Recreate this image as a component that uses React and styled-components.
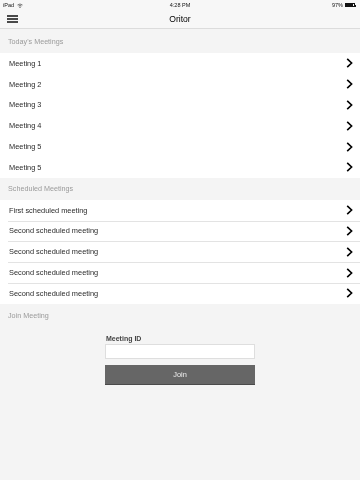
import React from 'react';
import styled, { createGlobalStyle } from 'styled-components';

const GlobalStyle = createGlobalStyle`
  html, body {
    margin: 0;
    padding: 0;
    background: #f4f4f4;
  }
  body {
    font-family: "Liberation Sans", Arial, sans-serif;
    -webkit-font-smoothing: antialiased;
  }
`;

const today = ['Meeting 1', 'Meeting 2', 'Meeting 3', 'Meeting 4', 'Meeting 5', 'Meeting 5'];
const scheduled = [
  'First scheduled meeting',
  'Second scheduled meeting',
  'Second scheduled meeting',
  'Second scheduled meeting',
  'Second scheduled meeting'
];

// the whole screen is greyscale; the filter also keeps the tiny text from colour fringing
const Screen = styled.div`
  width: 360px;
  height: 480px;
  background: #f4f4f4;
  display: flex;
  flex-direction: column;
  overflow: hidden;
  filter: grayscale(1);
`;

const StatusBar = styled.div`
  height: 10px;
  background: #f7f7f7;
  display: grid;
  grid-template-columns: 1fr auto 1fr;
  align-items: center;
  padding: 0 3px;
  font-size: 5.5px;
  color: #111;
`;

const StatusLeft = styled.div`
  display: flex;
  align-items: center;
  gap: 3px;
`;

const StatusRight = styled.div`
  display: flex;
  align-items: center;
  justify-content: flex-end;
  gap: 2px;
  padding-right: 2px;
`;

const Battery = styled.span`
  display: inline-block;
  width: 10px;
  height: 4px;
  border: 0.6px solid #111;
  background: linear-gradient(90deg, #111 92%, transparent 92%);
  box-sizing: border-box;
  position: relative;
  &::after {
    content: '';
    position: absolute;
    right: -2px;
    top: 1px;
    width: 1px;
    height: 1.5px;
    background: #111;
  }
`;

const NavBar = styled.div`
  height: 18px;
  background: #f7f7f7;
  border-bottom: 1px solid #dcdcdc;
  display: grid;
  grid-template-columns: 40px 1fr 40px;
  align-items: center;
`;

const MenuButton = styled.div`
  padding-left: 7px;
  display: flex;
  align-items: center;
`;

const Title = styled.div`
  text-align: center;
  font-size: 8.6px;
  color: #000;
`;

const SectionHeader = styled.div`
  height: ${(p) => p.h}px;
  display: flex;
  align-items: center;
  padding-left: 8px;
  font-size: 7.2px;
  color: #9a9a9a;
`;

const List = styled.div`
  background: #fff;
  display: flex;
  flex-direction: column;
`;

const Row = styled.div`
  height: 20.8px;
  box-sizing: border-box;
  display: flex;
  align-items: center;
  justify-content: space-between;
  padding: 0 7px 0 9px;
  font-size: 7.4px;
  color: #2a2a2a;
  position: relative;
  ${(p) =>
    p.divided &&
    `
    &:not(:first-child)::before {
      content: '';
      position: absolute;
      left: 8px;
      right: 0;
      top: 0;
      height: 1px;
      background: #e3e3e3;
    }
  `}
`;

const JoinForm = styled.div`
  display: flex;
  flex-direction: column;
  width: 150px;
  margin: 7px 0 0 105px;
`;

const Label = styled.label`
  font-size: 7px;
  font-weight: bold;
  color: #444;
  padding-left: 1px;
  margin-bottom: 2px;
`;

const Input = styled.input`
  height: 15px;
  box-sizing: border-box;
  border: 1px solid #dedede;
  background: #fff;
  outline: none;
  padding: 0 3px;
  margin: 0;
`;

const JoinButton = styled.button`
  margin-top: 6px;
  height: 20px;
  box-sizing: border-box;
  border: none;
  border-bottom: 1px solid #4a4a4a;
  background: #666;
  color: #f2f2f2;
  font-family: "Liberation Sans", Arial, sans-serif;
  font-size: 7.4px;
  padding: 0;
`;

const Chevron = () => (
  <svg width="7" height="10" viewBox="0 0 7 10">
    <path d="M1.2 0.9 L5.6 5 L1.2 9.1" fill="none" stroke="#000" strokeWidth="1.6" />
  </svg>
);

const Hamburger = () => (
  <svg width="11" height="8" viewBox="0 0 11 8">
    <path d="M0 1 H11 M0 4 H11 M0 7 H11" stroke="#111" strokeWidth="1.3" />
  </svg>
);

const Wifi = () => (
  <svg width="6" height="5" viewBox="0 0 6 5">
    <path d="M0.5 2 A4 4 0 0 1 5.5 2 M1.5 3 A2.5 2.5 0 0 1 4.5 3" fill="none" stroke="#222" strokeWidth="0.6" />
    <circle cx="3" cy="4.2" r="0.6" fill="#222" />
  </svg>
);

export default function App() {
  return (
    <Screen>
      <GlobalStyle />
      <StatusBar>
        <StatusLeft>
          <span>iPad</span>
          <Wifi />
        </StatusLeft>
        <span>4:28 PM</span>
        <StatusRight>
          <span>97%</span>
          <Battery />
        </StatusRight>
      </StatusBar>
      <NavBar>
        <MenuButton>
          <Hamburger />
        </MenuButton>
        <Title>Oritor</Title>
        <div />
      </NavBar>

      <SectionHeader h={24}>Today's Meetings</SectionHeader>
      <List>
        {today.map((m, i) => (
          <Row key={i}>
            {m}
            <Chevron />
          </Row>
        ))}
      </List>

      <SectionHeader h={22}>Scheduled Meetings</SectionHeader>
      <List>
        {scheduled.map((m, i) => (
          <Row key={i} divided>
            {m}
            <Chevron />
          </Row>
        ))}
      </List>

      <SectionHeader h={24}>Join Meeting</SectionHeader>
      <JoinForm>
        <Label>Meeting ID</Label>
        <Input type="text" />
        <JoinButton>Join</JoinButton>
      </JoinForm>
    </Screen>
  );
}
